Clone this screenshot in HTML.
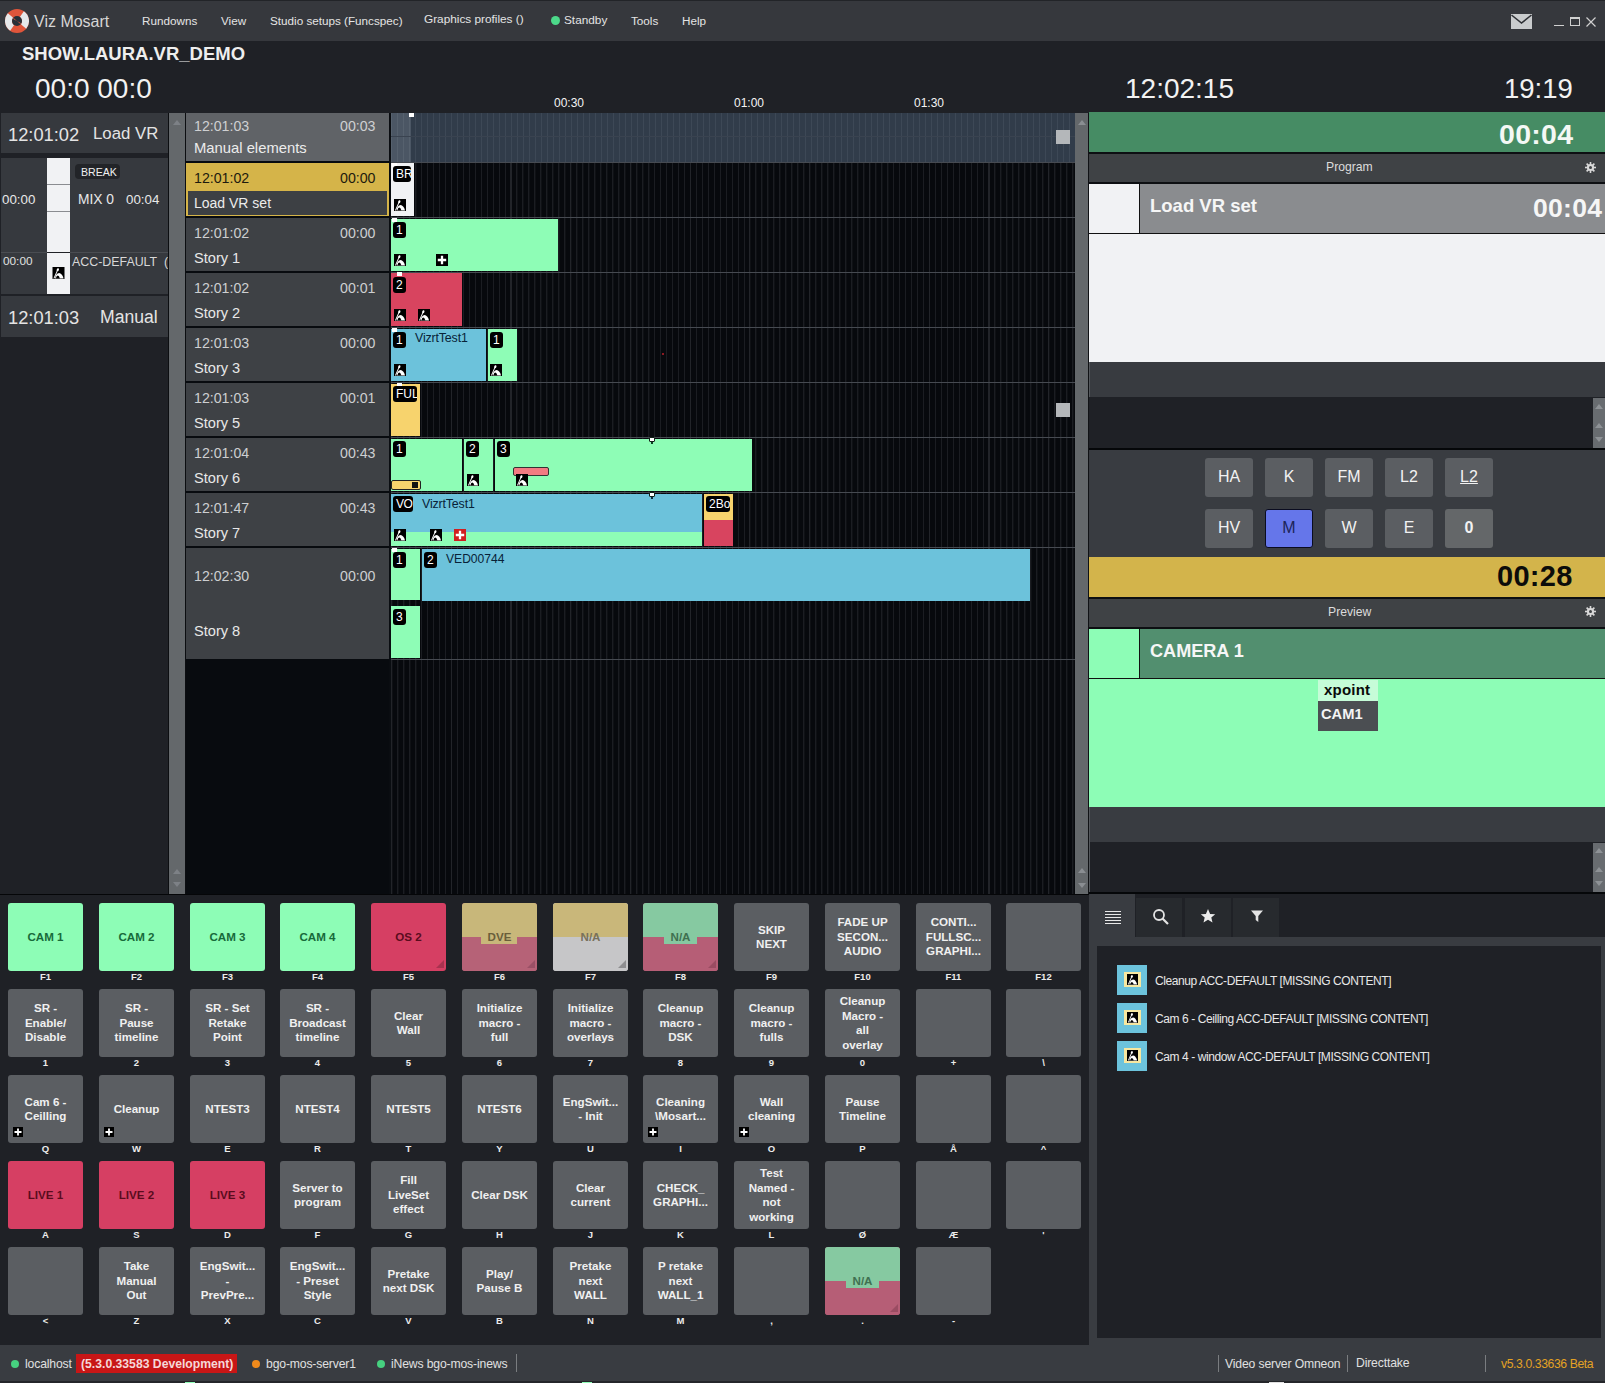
<!DOCTYPE html>
<html><head><meta charset="utf-8">
<style>
*{box-sizing:border-box}
html,body{margin:0;padding:0}
body{width:1605px;height:1383px;background:#1f2126;position:relative;overflow:hidden;font-family:"Liberation Sans",sans-serif;color:#e6e6e6}
.a{position:absolute}
.t{position:absolute;white-space:nowrap;line-height:1}
/* title bar */
#tb{left:0;top:0;width:1605px;height:40px;background:#36383d;border-top:1px solid #26282c}
.mn{position:absolute;top:15px;font-size:13px;color:#e4e4e4;white-space:nowrap;line-height:1}
/* timeline */
.grid{background-color:#07090d;background-image:repeating-linear-gradient(90deg,#222429 0px,#222429 1px,transparent 1px,transparent 59.75px),repeating-linear-gradient(90deg,#1b1d22 0px,#1b1d22 1px,#0f1115 1px,#0f1115 1.6px,transparent 1.6px,transparent 5.975px)}
.row{position:absolute;left:186px;width:203px;background:#3e4145}
.rt{position:absolute;left:8px;font-size:15px;color:#b9bbbe;white-space:nowrap;line-height:1}
.rd{position:absolute;right:14px;font-size:15px;color:#b9bbbe;white-space:nowrap;line-height:1}
.rn{position:absolute;left:8px;font-size:15px;color:#e8e8e8;white-space:nowrap;line-height:1}
.hl{position:absolute;left:389px;width:686px;height:1px;background:#3b4048}
.blk{position:absolute}
.num{position:absolute;background:#000;color:#fff;font-size:12px;line-height:16px;height:16px;border-radius:3px;padding:0 3px;white-space:nowrap;overflow:hidden}
.ic{position:absolute;width:13px;height:13px;background:#000}
/* buttons */
.btn{position:absolute;width:74px;height:67px;background:#5b5e62;border-radius:3px;color:#f0f0f0;font-size:12.5px;font-weight:bold;text-align:center;display:flex;align-items:center;justify-content:center;line-height:14.5px}
.key{position:absolute;width:74px;text-align:center;font-size:10px;font-weight:bold;color:#e8e8e8;line-height:1}
</style></head><body>

<svg width="0" height="0" style="position:absolute"><defs>
<symbol id="aic" viewBox="0 0 12 12"><rect width="12" height="12" fill="#000"/><path d="M0.9 11.4 L4.5 3.2 L5.4 3.5 L1.9 11.4 Z" fill="#fff"/><ellipse cx="5.3" cy="2.7" rx="1.1" ry="1.5" transform="rotate(25 5.3 2.7)" fill="#fff"/><path d="M2.5 11.4 Q3.4 6.4 6.6 6.1 Q9.4 6.3 11.1 11.4 Z" fill="#fff"/><path d="M3.3 11.5 Q4.0 8.6 5.3 8.6 Q6.6 8.7 7.4 11.5 Z" fill="#000"/></symbol>
</defs></svg>
<!-- TITLE BAR -->
<!-- TITLE BAR -->
<div class="a" style="left:0;top:0;width:1605px;height:41px;background:#36383d;border-top:1px solid #222428"></div>
<svg class="a" style="left:5px;top:9px" width="24" height="24" viewBox="1 1 24 24">
 <circle cx="13" cy="13" r="12" fill="#e0553a"/>
 <path d="M19.88 3.17 A12 12 0 0 1 22.19 20.71 L16.83 16.21 A5 5 0 0 0 15.87 8.90 Z" fill="#e6e8ea"/>
 <path d="M6.12 22.83 A12 12 0 0 1 3.81 5.29 L9.17 9.79 A5 5 0 0 0 10.13 17.10 Z" fill="#e6e8ea"/>
 <circle cx="13" cy="13" r="5" fill="#283038"/>
 <path d="M8.5 9 L13 13 L10 11.5 Z M17.5 17 L13 13 L16 14.5 Z" fill="#e0553a"/>
</svg>
<div class="t" style="left:34px;top:14px;font-size:16px;color:#d6d6d6">Viz Mosart</div>
<div class="mn" style="left:142px;font-size:11.7px">Rundowns</div>
<div class="mn" style="left:221px;font-size:11.7px">View</div>
<div class="mn" style="left:270px;font-size:11.7px">Studio setups (Funcspec)</div>
<div class="mn" style="left:424px;top:14px;font-size:11.8px">Graphics profiles ()</div>
<div class="a" style="left:551px;top:16px;width:9px;height:9px;border-radius:50%;background:#4cd98a"></div>
<div class="mn" style="left:564px;font-size:11.8px">Standby</div>
<div class="mn" style="left:631px;font-size:11.7px">Tools</div>
<div class="mn" style="left:682px;font-size:11.7px">Help</div>
<svg class="a" style="left:1510px;top:13px" width="23" height="17" viewBox="0 0 23 17"><rect x="1" y="1" width="21" height="15" fill="#c9cbcd"/><path d="M1.5 2 L11.5 10 L21.5 2" stroke="#2e3035" stroke-width="1.6" fill="none"/></svg>
<div class="a" style="left:1554px;top:25px;width:10px;height:1px;background:#d0d0d0"></div>
<div class="a" style="left:1570px;top:17px;width:10px;height:9px;border:1px solid #d0d0d0;border-top-width:2px"></div>
<svg class="a" style="left:1586px;top:17px" width="10" height="10" viewBox="0 0 10 10"><path d="M0.5 0.5 L9.5 9.5 M9.5 0.5 L0.5 9.5" stroke="#d0d0d0" stroke-width="1.2"/></svg>

<!-- HEADER -->
<div class="t" style="left:22px;top:45px;font-size:18.5px;font-weight:bold;color:#eeeeee">SHOW.LAURA.VR_DEMO</div>
<div class="t" style="left:35px;top:75px;font-size:28px;color:#f2f2f2">00:0 00:0</div>
<div class="t" style="left:1125px;top:75px;font-size:28px;color:#f2f2f2">12:02:15</div>
<div class="t" style="left:1504px;top:75px;font-size:27.5px;color:#f2f2f2">19:19</div>
<div class="t" style="left:554px;top:97px;font-size:12px;color:#f4f4f4">00:30</div>
<div class="t" style="left:734px;top:97px;font-size:12px;color:#f4f4f4">01:00</div>
<div class="t" style="left:914px;top:97px;font-size:12px;color:#f4f4f4">01:30</div>

<!-- LEFT PANEL -->
<div class="a" style="left:0;top:113px;width:169px;height:781px;background:#1f2126"></div>
<div class="a" style="left:1px;top:113px;width:167px;height:40px;background:#36393e"></div>
<div class="t" style="left:8px;top:126px;font-size:18.3px;color:#e4e4e4">12:01:02</div>
<div class="t" style="left:93px;top:126px;font-size:16.8px;color:#e4e4e4">Load VR</div>
<div class="a" style="left:1px;top:158px;width:167px;height:136px;background:#36393e;overflow:hidden">
  <div class="a" style="left:46px;top:0;width:1px;height:136px;background:#33363a"></div>
  <div class="a" style="left:46px;top:0;width:23px;height:136px;background:#f1f2f4"></div>
  <div class="a" style="left:46px;top:26px;width:23px;height:1px;background:#8a8c90"></div>
  <div class="a" style="left:46px;top:53px;width:23px;height:1px;background:#8a8c90"></div>
  <div class="a" style="left:0;top:94px;width:168px;height:1px;background:#4a4d52"></div>
  <div class="a" style="left:46px;top:94px;width:23px;height:1px;background:#202226"></div>
  <div class="a" style="left:74px;top:6px;width:45px;height:15px;border-radius:4px;background:#222428"></div>
  <div class="t" style="left:80px;top:9px;font-size:10.6px;color:#f0f0f0">BREAK</div>
  <div class="t" style="left:1px;top:35px;font-size:13.3px;color:#e8e8e8">00:00</div>
  <div class="t" style="left:77px;top:35px;font-size:13.8px;color:#e8e8e8">MIX 0</div>
  <div class="t" style="left:125px;top:35px;font-size:13.3px;color:#e8e8e8">00:04</div>
  <div class="t" style="left:2px;top:98px;font-size:11.8px;color:#e0e0e0">00:00</div>
  <div class="t" style="left:71px;top:98px;font-size:12.4px;color:#d8d8d8">ACC-DEFAULT&nbsp;&nbsp;(</div>
  <svg class="a" style="left:51px;top:109px" width="13" height="12"><use href="#aic"/></svg>
</div>
<div class="a" style="left:1px;top:296px;width:167px;height:41px;background:#36393e"></div>
<div class="t" style="left:8px;top:309px;font-size:18.3px;color:#e4e4e4">12:01:03</div>
<div class="t" style="left:100px;top:309px;font-size:17.6px;color:#e4e4e4">Manual</div>

<!-- LEFT SCROLLBAR -->
<div class="a" style="left:168px;top:113px;width:1px;height:781px;background:#0c0e11"></div><div class="a" style="left:169px;top:113px;width:16px;height:781px;background:#64686b"></div>
<div class="a" style="left:173px;top:120px;width:0;height:0;border-left:4px solid transparent;border-right:4px solid transparent;border-bottom:5px solid #7d8186"></div>
<div class="a" style="left:173px;top:869px;width:0;height:0;border-left:4px solid transparent;border-right:4px solid transparent;border-bottom:5px solid #7d8186"></div>
<div class="a" style="left:173px;top:882px;width:0;height:0;border-left:4px solid transparent;border-right:4px solid transparent;border-top:5px solid #7d8186"></div>

<div class="a" style="left:186px;top:113px;width:203px;height:781px;background:#080b0f"></div>
<div class="a" style="left:185px;top:113px;width:1px;height:781px;background:#0c0e11"></div>
<div class="a grid" style="left:391px;top:113px;width:684px;height:781px"></div>
<div class="a" style="left:389px;top:113px;width:2px;height:781px;background:#0a0d11"></div>
<div class="a" style="left:391px;top:113px;width:684px;height:49px;background-color:#313c4a;background-image:repeating-linear-gradient(90deg,#3d4856 0px,#3d4856 1px,transparent 1px,transparent 6px)"></div>
<div class="a" style="left:391px;top:113px;width:20px;height:49px;background-color:#4b5664;background-image:repeating-linear-gradient(90deg,#56616e 0px,#56616e 1px,transparent 1px,transparent 6px)"></div>
<div class="a" style="left:391px;top:136px;width:684px;height:1px;background:#3a4350"></div>
<div class="a" style="left:409px;top:113px;width:5px;height:4px;background:#fff"></div>
<div class="a" style="left:1056px;top:130px;width:14px;height:14px;background:#b4b7ba"></div>
<div class="a" style="left:1056px;top:403px;width:14px;height:14px;background:#b4b7ba"></div>
<div class="a" style="left:391px;top:162px;width:684px;height:1px;background:#464a51"></div>
<div class="a" style="left:391px;top:217px;width:684px;height:1px;background:#464a51"></div>
<div class="a" style="left:391px;top:272px;width:684px;height:1px;background:#464a51"></div>
<div class="a" style="left:391px;top:327px;width:684px;height:1px;background:#464a51"></div>
<div class="a" style="left:391px;top:382px;width:684px;height:1px;background:#464a51"></div>
<div class="a" style="left:391px;top:437px;width:684px;height:1px;background:#464a51"></div>
<div class="a" style="left:391px;top:492px;width:684px;height:1px;background:#464a51"></div>
<div class="a" style="left:391px;top:547px;width:684px;height:1px;background:#464a51"></div>
<div class="a" style="left:391px;top:659px;width:684px;height:1px;background:#464a51"></div>
<div class="a" style="left:186px;top:113px;width:203px;height:48px;background:#606367"></div>
<div class="t" style="left:194px;top:119px;font-size:14.2px;color:#cfd0d2">12:01:03</div>
<div class="t" style="left:340px;top:119px;font-size:14.2px;color:#cfd0d2">00:03</div>
<div class="t" style="left:194px;top:141px;font-size:14.8px;color:#ececec">Manual elements</div>
<div class="a" style="left:186px;top:163px;width:203px;height:53px;background:#d5b449"></div>
<div class="a" style="left:188px;top:191px;width:199px;height:24px;background:#3d4044"></div>
<div class="t" style="left:194px;top:171px;font-size:14.2px;color:#1d1a0e">12:01:02</div>
<div class="t" style="left:340px;top:171px;font-size:14.2px;color:#1d1a0e">00:00</div>
<div class="t" style="left:194px;top:196px;font-size:14px;color:#ececec">Load VR set</div>
<div class="a" style="left:186px;top:218px;width:203px;height:53px;background:#3e4145"></div>
<div class="t" style="left:194px;top:226px;font-size:14.2px;color:#cdcfd1">12:01:02</div>
<div class="t" style="left:340px;top:226px;font-size:14.2px;color:#cdcfd1">00:00</div>
<div class="t" style="left:194px;top:251px;font-size:14.6px;color:#e8e8e8">Story 1</div>
<div class="a" style="left:186px;top:273px;width:203px;height:53px;background:#3e4145"></div>
<div class="t" style="left:194px;top:281px;font-size:14.2px;color:#cdcfd1">12:01:02</div>
<div class="t" style="left:340px;top:281px;font-size:14.2px;color:#cdcfd1">00:01</div>
<div class="t" style="left:194px;top:306px;font-size:14.6px;color:#e8e8e8">Story 2</div>
<div class="a" style="left:186px;top:328px;width:203px;height:53px;background:#3e4145"></div>
<div class="t" style="left:194px;top:336px;font-size:14.2px;color:#cdcfd1">12:01:03</div>
<div class="t" style="left:340px;top:336px;font-size:14.2px;color:#cdcfd1">00:00</div>
<div class="t" style="left:194px;top:361px;font-size:14.6px;color:#e8e8e8">Story 3</div>
<div class="a" style="left:186px;top:383px;width:203px;height:53px;background:#3e4145"></div>
<div class="t" style="left:194px;top:391px;font-size:14.2px;color:#cdcfd1">12:01:03</div>
<div class="t" style="left:340px;top:391px;font-size:14.2px;color:#cdcfd1">00:01</div>
<div class="t" style="left:194px;top:416px;font-size:14.6px;color:#e8e8e8">Story 5</div>
<div class="a" style="left:186px;top:438px;width:203px;height:53px;background:#3e4145"></div>
<div class="t" style="left:194px;top:446px;font-size:14.2px;color:#cdcfd1">12:01:04</div>
<div class="t" style="left:340px;top:446px;font-size:14.2px;color:#cdcfd1">00:43</div>
<div class="t" style="left:194px;top:471px;font-size:14.6px;color:#e8e8e8">Story 6</div>
<div class="a" style="left:186px;top:493px;width:203px;height:53px;background:#3e4145"></div>
<div class="t" style="left:194px;top:501px;font-size:14.2px;color:#cdcfd1">12:01:47</div>
<div class="t" style="left:340px;top:501px;font-size:14.2px;color:#cdcfd1">00:43</div>
<div class="t" style="left:194px;top:526px;font-size:14.6px;color:#e8e8e8">Story 7</div>
<div class="a" style="left:186px;top:548px;width:203px;height:111px;background:#3e4145"></div>
<div class="t" style="left:194px;top:569px;font-size:14.2px;color:#cdcfd1">12:02:30</div>
<div class="t" style="left:340px;top:569px;font-size:14.2px;color:#cdcfd1">00:00</div>
<div class="t" style="left:194px;top:624px;font-size:14.6px;color:#e8e8e8">Story 8</div>
<div class="a" style="left:391px;top:163px;width:23px;height:53px;background:#f1f2f4"></div>
<div class="a" style="left:392px;top:163px;width:5px;height:4px;background:#fff"></div>
<div class="num" style="left:393px;top:166px;width:18px;">BR</div>
<svg class="a" style="left:394px;top:199px" width="12" height="12"><use href="#aic"/></svg>
<div class="a" style="left:391px;top:219px;width:167px;height:52px;background:#8efdb6"></div>
<div class="a" style="left:392px;top:218px;width:5px;height:4px;background:#fff"></div>
<div class="num" style="left:393px;top:222px;">1</div>
<svg class="a" style="left:394px;top:254px" width="12" height="12"><use href="#aic"/></svg>
<svg class="a" style="left:436px;top:254px" width="12" height="12" viewBox="0 0 12 12"><rect width="12" height="12" fill="#000"/><path d="M6 1.8 V10.2 M1.8 6 H10.2" stroke="#fff" stroke-width="2.3"/></svg>
<div class="a" style="left:391px;top:273px;width:71px;height:53px;background:#d8445f"></div>
<div class="a" style="left:397px;top:272px;width:5px;height:4px;background:#fff"></div>
<div class="num" style="left:393px;top:277px;">2</div>
<svg class="a" style="left:394px;top:309px" width="12" height="12"><use href="#aic"/></svg>
<svg class="a" style="left:418px;top:309px" width="12" height="12"><use href="#aic"/></svg>
<div class="a" style="left:391px;top:329px;width:95px;height:52px;background:#6cc2db"></div>
<div class="a" style="left:488px;top:329px;width:29px;height:52px;background:#8efdb6"></div>
<div class="a" style="left:392px;top:328px;width:5px;height:4px;background:#fff"></div>
<div class="num" style="left:393px;top:332px;">1</div>
<div class="num" style="left:490px;top:332px;">1</div>
<div class="t" style="left:415px;top:332px;font-size:12.4px;letter-spacing:-0.15px;color:#082238">VizrtTest1</div>
<svg class="a" style="left:394px;top:364px" width="12" height="12"><use href="#aic"/></svg>
<svg class="a" style="left:490px;top:364px" width="12" height="12"><use href="#aic"/></svg>
<div class="a" style="left:662px;top:353px;width:2px;height:2px;background:#8a1a22"></div>
<div class="a" style="left:391px;top:384px;width:29px;height:52px;background:#f7d36d"></div>
<div class="a" style="left:397px;top:383px;width:5px;height:4px;background:#fff"></div>
<div class="num" style="left:393px;top:386px;width:24px;">FUL</div>
<div class="a" style="left:391px;top:439px;width:71px;height:52px;background:#8efdb6"></div>
<div class="a" style="left:464px;top:439px;width:29px;height:52px;background:#8efdb6"></div>
<div class="a" style="left:495px;top:439px;width:257px;height:52px;background:#8efdb6"></div>
<div class="num" style="left:393px;top:441px;">1</div>
<div class="num" style="left:466px;top:441px;">2</div>
<div class="num" style="left:497px;top:441px;">3</div>
<div class="a" style="left:391px;top:480px;width:30px;height:10px;background:#f7d36d;border:1px solid #222;border-radius:2px"></div>
<div class="a" style="left:412px;top:482px;width:6px;height:6px;background:#111"></div>
<div class="a" style="left:513px;top:467px;width:36px;height:9px;background:#f27b82;border:1px solid #333;border-radius:2px"></div>
<svg class="a" style="left:467px;top:474px" width="12" height="12"><use href="#aic"/></svg>
<svg class="a" style="left:516px;top:474px" width="12" height="12"><use href="#aic"/></svg>
<div class="a" style="left:649px;top:437px;width:6px;height:5px;background:#fff;border:1px solid #102018;border-radius:1px"></div><div class="a" style="left:651px;top:442px;width:2px;height:2px;background:#0c3a22"></div>
<div class="a" style="left:391px;top:494px;width:311px;height:38px;background:#6cc2db"></div>
<div class="a" style="left:391px;top:532px;width:311px;height:14px;background:#8efdb6"></div>
<div class="a" style="left:704px;top:494px;width:29px;height:26px;background:#f7d36d"></div>
<div class="a" style="left:704px;top:520px;width:29px;height:26px;background:#d8445f"></div>
<div class="num" style="left:393px;top:496px;width:20px;"><span style="letter-spacing:-0.6px">VO</span></div>
<div class="num" style="left:706px;top:496px;width:24px;">2Box</div>
<div class="t" style="left:422px;top:498px;font-size:12.4px;letter-spacing:-0.15px;color:#082238">VizrtTest1</div>
<svg class="a" style="left:394px;top:529px" width="12" height="12"><use href="#aic"/></svg>
<svg class="a" style="left:430px;top:529px" width="12" height="12"><use href="#aic"/></svg>
<svg class="a" style="left:454px;top:529px" width="12" height="12" viewBox="0 0 12 12"><rect width="12" height="12" fill="#d11f1f"/><path d="M6 1.8 V10.2 M1.8 6 H10.2" stroke="#fff" stroke-width="2.3"/></svg>
<div class="a" style="left:649px;top:492px;width:6px;height:5px;background:#fff;border:1px solid #102018;border-radius:1px"></div><div class="a" style="left:651px;top:497px;width:2px;height:2px;background:#0c2a3a"></div>
<div class="a" style="left:391px;top:549px;width:29px;height:51px;background:#8efdb6"></div>
<div class="a" style="left:422px;top:549px;width:608px;height:52px;background:#6cc2db"></div>
<div class="a" style="left:391px;top:606px;width:29px;height:52px;background:#8efdb6"></div>
<div class="a" style="left:392px;top:548px;width:5px;height:4px;background:#fff"></div>
<div class="num" style="left:393px;top:552px;">1</div>
<div class="num" style="left:424px;top:552px;">2</div>
<div class="num" style="left:393px;top:609px;">3</div>
<div class="t" style="left:446px;top:553px;font-size:12.1px;color:#082238">VED00744</div>
<div class="a" style="left:1075px;top:113px;width:13px;height:781px;background:#64686b"></div>
<div class="a" style="left:1088px;top:113px;width:1px;height:781px;background:#101215"></div>
<div class="a" style="left:1078px;top:120px;width:0;height:0;border-left:4px solid transparent;border-right:4px solid transparent;border-bottom:5px solid #8a8e92"></div>
<div class="a" style="left:1078px;top:868px;width:0;height:0;border-left:4px solid transparent;border-right:4px solid transparent;border-bottom:5px solid #8a8e92"></div>
<div class="a" style="left:1078px;top:883px;width:0;height:0;border-left:4px solid transparent;border-right:4px solid transparent;border-top:5px solid #8a8e92"></div>
<div class="a" style="left:1089px;top:113px;width:516px;height:780px;background:#393c41"></div>
<div class="a" style="left:1089px;top:112px;width:516px;height:40px;background:#468c64"></div>
<div class="t" style="left:1499px;top:120px;font-size:28.5px;font-weight:bold;color:#f4f8f5;letter-spacing:0.3px">00:04</div>
<div class="a" style="left:1089px;top:152px;width:516px;height:2px;background:#0d0f12"></div>
<div class="a" style="left:1089px;top:154px;width:516px;height:28px;background:#3f4245"></div>
<div class="t" style="left:1326px;top:161px;font-size:12.2px;color:#dcdcdc">Program</div>
<svg class="a" style="left:1585px;top:162px" width="11" height="11" viewBox="0 0 11 11"><g fill="#d8d8d8"><circle cx="5.5" cy="5.5" r="3.6"/><rect x="4.7" y="0" width="1.6" height="11"/><rect x="0" y="4.7" width="11" height="1.6"/><rect x="4.7" y="0" width="1.6" height="11" transform="rotate(45 5.5 5.5)"/><rect x="4.7" y="0" width="1.6" height="11" transform="rotate(-45 5.5 5.5)"/></g><circle cx="5.5" cy="5.5" r="1.5" fill="#3f4245"/></svg>
<div class="a" style="left:1089px;top:182px;width:516px;height:2px;background:#0d0f12"></div>
<div class="a" style="left:1089px;top:184px;width:50px;height:49px;background:#f1f2f4"></div>
<div class="a" style="left:1139px;top:184px;width:1px;height:49px;background:#111"></div>
<div class="a" style="left:1140px;top:184px;width:465px;height:49px;background:#8a8c8f"></div>
<div class="t" style="left:1150px;top:197px;font-size:18.5px;font-weight:bold;color:#f6f6f6">Load VR set</div>
<div class="t" style="left:1533px;top:195px;font-size:26.5px;font-weight:bold;color:#f6f6f6;letter-spacing:0.3px">00:04</div>
<div class="a" style="left:1089px;top:233px;width:516px;height:1px;background:#111"></div>
<div class="a" style="left:1089px;top:234px;width:516px;height:128px;background:#f1f2f4"></div>
<div class="a" style="left:1089px;top:362px;width:516px;height:35px;background:#383b40"></div>
<div class="a" style="left:1089px;top:362px;width:1px;height:88px;background:#55595d"></div>
<div class="a" style="left:1089px;top:397px;width:516px;height:51px;background:#1f2126"></div>
<div class="a" style="left:1593px;top:398px;width:12px;height:50px;background:#686c70"></div>
<div class="a" style="left:1595px;top:404px;width:0;height:0;border-left:4px solid transparent;border-right:4px solid transparent;border-bottom:5px solid #8e9296"></div>
<div class="a" style="left:1595px;top:423px;width:0;height:0;border-left:4px solid transparent;border-right:4px solid transparent;border-bottom:5px solid #8e9296"></div>
<div class="a" style="left:1595px;top:437px;width:0;height:0;border-left:4px solid transparent;border-right:4px solid transparent;border-top:5px solid #8e9296"></div>
<div class="a" style="left:1089px;top:448px;width:516px;height:2px;background:#050709"></div>
<div class="a" style="left:1089px;top:450px;width:516px;height:107px;background:#393c41"></div>
<div class="a" style="left:1205px;top:458px;width:48px;height:39px;background:#5b5e62;border-radius:3px;"></div>
<div class="a" style="left:1205px;top:458px;width:48px;height:39px;line-height:37px;text-align:center;font-size:16px;font-weight:normal;color:#f2f2f2">HA</div>
<div class="a" style="left:1265px;top:458px;width:48px;height:39px;background:#5b5e62;border-radius:3px;"></div>
<div class="a" style="left:1265px;top:458px;width:48px;height:39px;line-height:37px;text-align:center;font-size:16px;font-weight:normal;color:#f2f2f2">K</div>
<div class="a" style="left:1325px;top:458px;width:48px;height:39px;background:#5b5e62;border-radius:3px;"></div>
<div class="a" style="left:1325px;top:458px;width:48px;height:39px;line-height:37px;text-align:center;font-size:16px;font-weight:normal;color:#f2f2f2">FM</div>
<div class="a" style="left:1385px;top:458px;width:48px;height:39px;background:#5b5e62;border-radius:3px;"></div>
<div class="a" style="left:1385px;top:458px;width:48px;height:39px;line-height:37px;text-align:center;font-size:16px;font-weight:normal;color:#f2f2f2">L2</div>
<div class="a" style="left:1445px;top:458px;width:48px;height:39px;background:#5b5e62;border-radius:3px;"></div>
<div class="a" style="left:1445px;top:458px;width:48px;height:39px;line-height:37px;text-align:center;font-size:16px;font-weight:normal;color:#f2f2f2"><span style="text-decoration:underline">L2</span></div>
<div class="a" style="left:1205px;top:509px;width:48px;height:39px;background:#5b5e62;border-radius:3px;"></div>
<div class="a" style="left:1205px;top:509px;width:48px;height:39px;line-height:37px;text-align:center;font-size:16px;font-weight:normal;color:#f2f2f2">HV</div>
<div class="a" style="left:1265px;top:509px;width:48px;height:39px;background:#6576ea;border-radius:3px;border:1px solid #0a0c20;"></div>
<div class="a" style="left:1265px;top:509px;width:48px;height:39px;line-height:37px;text-align:center;font-size:16px;font-weight:normal;color:#1c2458">M</div>
<div class="a" style="left:1325px;top:509px;width:48px;height:39px;background:#5b5e62;border-radius:3px;"></div>
<div class="a" style="left:1325px;top:509px;width:48px;height:39px;line-height:37px;text-align:center;font-size:16px;font-weight:normal;color:#f2f2f2">W</div>
<div class="a" style="left:1385px;top:509px;width:48px;height:39px;background:#5b5e62;border-radius:3px;"></div>
<div class="a" style="left:1385px;top:509px;width:48px;height:39px;line-height:37px;text-align:center;font-size:16px;font-weight:normal;color:#f2f2f2">E</div>
<div class="a" style="left:1445px;top:509px;width:48px;height:39px;background:#646769;border-radius:3px;"></div>
<div class="a" style="left:1445px;top:509px;width:48px;height:39px;line-height:37px;text-align:center;font-size:16px;font-weight:bold;color:#f2f2f2">0</div>
<div class="a" style="left:1089px;top:557px;width:516px;height:40px;background:#d3b44b"></div>
<div class="t" style="left:1497px;top:562px;font-size:29px;font-weight:bold;color:#0c0c0a;letter-spacing:0.3px">00:28</div>
<div class="a" style="left:1089px;top:597px;width:516px;height:2px;background:#0d0f12"></div>
<div class="a" style="left:1089px;top:599px;width:516px;height:28px;background:#3f4245"></div>
<div class="t" style="left:1328px;top:606px;font-size:12.2px;color:#dcdcdc">Preview</div>
<svg class="a" style="left:1585px;top:606px" width="11" height="11" viewBox="0 0 11 11"><g fill="#d8d8d8"><circle cx="5.5" cy="5.5" r="3.6"/><rect x="4.7" y="0" width="1.6" height="11"/><rect x="0" y="4.7" width="11" height="1.6"/><rect x="4.7" y="0" width="1.6" height="11" transform="rotate(45 5.5 5.5)"/><rect x="4.7" y="0" width="1.6" height="11" transform="rotate(-45 5.5 5.5)"/></g><circle cx="5.5" cy="5.5" r="1.5" fill="#3f4245"/></svg>
<div class="a" style="left:1089px;top:627px;width:516px;height:2px;background:#0d0f12"></div>
<div class="a" style="left:1089px;top:629px;width:50px;height:49px;background:#8dfdb6"></div>
<div class="a" style="left:1139px;top:629px;width:1px;height:49px;background:#111"></div>
<div class="a" style="left:1140px;top:629px;width:465px;height:49px;background:#528f6f"></div>
<div class="t" style="left:1150px;top:642px;font-size:18.1px;font-weight:bold;color:#f6f6f6">CAMERA 1</div>
<div class="a" style="left:1089px;top:678px;width:516px;height:1px;background:#111"></div>
<div class="a" style="left:1089px;top:679px;width:516px;height:128px;background:#8dfdb6"></div>
<div class="a" style="left:1318px;top:680px;width:60px;height:21px;background:#c6fcd8"></div>
<div class="t" style="left:1324px;top:682px;font-size:15px;font-weight:bold;color:#0a0a0a;letter-spacing:0.2px">xpoint</div>
<div class="a" style="left:1318px;top:701px;width:60px;height:30px;background:#4b4e52"></div>
<div class="t" style="left:1321px;top:707px;font-size:14.7px;font-weight:bold;color:#f4f4f4">CAM1</div>
<div class="a" style="left:1089px;top:807px;width:516px;height:35px;background:#393c41"></div>
<div class="a" style="left:1089px;top:842px;width:516px;height:50px;background:#1f2126"></div>
<div class="a" style="left:1089px;top:807px;width:1px;height:85px;background:#55595d"></div>
<div class="a" style="left:1593px;top:843px;width:12px;height:49px;background:#686c70"></div>
<div class="a" style="left:1595px;top:848px;width:0;height:0;border-left:4px solid transparent;border-right:4px solid transparent;border-bottom:5px solid #8e9296"></div>
<div class="a" style="left:1595px;top:867px;width:0;height:0;border-left:4px solid transparent;border-right:4px solid transparent;border-bottom:5px solid #8e9296"></div>
<div class="a" style="left:1595px;top:881px;width:0;height:0;border-left:4px solid transparent;border-right:4px solid transparent;border-top:5px solid #8e9296"></div>
<div class="a" style="left:1089px;top:892px;width:516px;height:2px;background:#050709"></div>
<div class="a" style="left:1089px;top:894px;width:516px;height:451px;background:#1f2126"></div>
<div class="a" style="left:1089px;top:937px;width:516px;height:408px;background:#393c41"></div>
<div class="a" style="left:1089px;top:894px;width:46px;height:50px;background:#393c41"></div>
<div class="a" style="left:1136px;top:898px;width:46px;height:39px;background:#272a2e"></div>
<div class="a" style="left:1185px;top:898px;width:46px;height:39px;background:#272a2e"></div>
<div class="a" style="left:1233px;top:898px;width:46px;height:39px;background:#272a2e"></div>
<div class="a" style="left:1105px;top:911px;width:16px;height:1.4px;background:#e8e8e8"></div>
<div class="a" style="left:1105px;top:914px;width:16px;height:1.4px;background:#e8e8e8"></div>
<div class="a" style="left:1105px;top:917px;width:16px;height:1.4px;background:#e8e8e8"></div>
<div class="a" style="left:1105px;top:920px;width:16px;height:1.4px;background:#e8e8e8"></div>
<div class="a" style="left:1105px;top:923px;width:16px;height:1.4px;background:#e8e8e8"></div>
<svg class="a" style="left:1152px;top:908px" width="18" height="18" viewBox="0 0 18 18"><circle cx="7" cy="7" r="5" stroke="#e4e4e4" stroke-width="1.8" fill="none"/><path d="M10.5 10.5 L16 16" stroke="#e4e4e4" stroke-width="2.2"/></svg>
<svg class="a" style="left:1200px;top:908px" width="16" height="16" viewBox="0 0 16 16"><path d="M8 1 L10.1 5.9 L15.2 6.2 L11.3 9.5 L12.5 14.5 L8 11.7 L3.5 14.5 L4.7 9.5 L0.8 6.2 L5.9 5.9 Z" fill="#ececec"/></svg>
<svg class="a" style="left:1250px;top:909px" width="14" height="14" viewBox="0 0 14 14"><path d="M1 1.5 H13 L8.3 7 V13 L5.7 11 V7 Z" fill="#e4e4e4"/></svg>
<div class="a" style="left:1097px;top:946px;width:504px;height:392px;background:#1f2126"></div>
<div class="a" style="left:1117px;top:965px;width:30px;height:30px;background:#6cc3dc"></div>
<div class="a" style="left:1124px;top:972px;width:17px;height:15px;background:#f7e7a0"></div>
<svg class="a" style="left:1126px;top:974px" width="13" height="11"><use href="#aic"/></svg>
<div class="t" style="left:1155px;top:975px;font-size:12px;letter-spacing:-0.42px;color:#e8e8e8">Cleanup ACC-DEFAULT [MISSING CONTENT]</div>
<div class="a" style="left:1117px;top:1003px;width:30px;height:30px;background:#6cc3dc"></div>
<div class="a" style="left:1124px;top:1010px;width:17px;height:15px;background:#f7e7a0"></div>
<svg class="a" style="left:1126px;top:1012px" width="13" height="11"><use href="#aic"/></svg>
<div class="t" style="left:1155px;top:1013px;font-size:12px;letter-spacing:-0.42px;color:#e8e8e8">Cam 6 - Ceilling ACC-DEFAULT [MISSING CONTENT]</div>
<div class="a" style="left:1117px;top:1041px;width:30px;height:30px;background:#6cc3dc"></div>
<div class="a" style="left:1124px;top:1048px;width:17px;height:15px;background:#f7e7a0"></div>
<svg class="a" style="left:1126px;top:1050px" width="13" height="11"><use href="#aic"/></svg>
<div class="t" style="left:1155px;top:1051px;font-size:12px;letter-spacing:-0.42px;color:#e8e8e8">Cam 4 - window ACC-DEFAULT [MISSING CONTENT]</div>
<div class="a" style="left:0;top:894px;width:1089px;height:451px;background:#1f2126"></div>
<div class="a" style="left:0;top:894px;width:1089px;height:1px;background:#050608"></div>
<div class="a" style="left:1089px;top:937px;width:8px;height:408px;background:#393c41"></div>
<div class="a" style="left:8px;top:903px;width:75px;height:68px;background:#8dfdb6;border-radius:3px;overflow:hidden"><div class="a" style="left:0;top:0;width:75px;height:68px;display:flex;align-items:center;justify-content:center;text-align:center;font-size:11.6px;font-weight:bold;line-height:14.5px;color:#176a3a">CAM 1</div></div>
<div class="t" style="left:8px;top:972px;width:75px;text-align:center;font-size:9.5px;font-weight:bold;color:#ececec">F1</div>
<div class="a" style="left:99px;top:903px;width:75px;height:68px;background:#8dfdb6;border-radius:3px;overflow:hidden"><div class="a" style="left:0;top:0;width:75px;height:68px;display:flex;align-items:center;justify-content:center;text-align:center;font-size:11.6px;font-weight:bold;line-height:14.5px;color:#176a3a">CAM 2</div></div>
<div class="t" style="left:99px;top:972px;width:75px;text-align:center;font-size:9.5px;font-weight:bold;color:#ececec">F2</div>
<div class="a" style="left:190px;top:903px;width:75px;height:68px;background:#8dfdb6;border-radius:3px;overflow:hidden"><div class="a" style="left:0;top:0;width:75px;height:68px;display:flex;align-items:center;justify-content:center;text-align:center;font-size:11.6px;font-weight:bold;line-height:14.5px;color:#176a3a">CAM 3</div></div>
<div class="t" style="left:190px;top:972px;width:75px;text-align:center;font-size:9.5px;font-weight:bold;color:#ececec">F3</div>
<div class="a" style="left:280px;top:903px;width:75px;height:68px;background:#8dfdb6;border-radius:3px;overflow:hidden"><div class="a" style="left:0;top:0;width:75px;height:68px;display:flex;align-items:center;justify-content:center;text-align:center;font-size:11.6px;font-weight:bold;line-height:14.5px;color:#176a3a">CAM 4</div></div>
<div class="t" style="left:280px;top:972px;width:75px;text-align:center;font-size:9.5px;font-weight:bold;color:#ececec">F4</div>
<div class="a" style="left:371px;top:903px;width:75px;height:68px;background:#d63f63;border-radius:3px;overflow:hidden"><div class="a" style="left:65px;top:57px;width:0;height:0;border-left:8px solid transparent;border-bottom:8px solid #a8324f"></div><div class="a" style="left:0;top:0;width:75px;height:68px;display:flex;align-items:center;justify-content:center;text-align:center;font-size:11.6px;font-weight:bold;line-height:14.5px;color:#5a0c1e">OS 2</div></div>
<div class="t" style="left:371px;top:972px;width:75px;text-align:center;font-size:9.5px;font-weight:bold;color:#ececec">F5</div>
<div class="a" style="left:462px;top:903px;width:75px;height:68px;background:#b66277;border-radius:3px;overflow:hidden"><div class="a" style="left:0;top:0;width:75px;height:34px;background:#c8b77a"></div><div class="a" style="left:0;top:34px;width:75px;height:34px;background:#b66277"></div><div class="a" style="left:19px;top:33px;width:36px;height:8px;background:#c8b77a"></div><div class="a" style="left:65px;top:57px;width:0;height:0;border-left:8px solid transparent;border-bottom:8px solid #9a5066"></div><div class="a" style="left:0;top:0;width:75px;height:68px;display:flex;align-items:center;justify-content:center;text-align:center;font-size:11.6px;font-weight:bold;line-height:14.5px;color:#6a5e3a">DVE</div></div>
<div class="t" style="left:462px;top:972px;width:75px;text-align:center;font-size:9.5px;font-weight:bold;color:#ececec">F6</div>
<div class="a" style="left:553px;top:903px;width:75px;height:68px;background:#c6c6c8;border-radius:3px;overflow:hidden"><div class="a" style="left:0;top:0;width:75px;height:34px;background:#c9b77a"></div><div class="a" style="left:0;top:34px;width:75px;height:34px;background:#c6c6c8"></div><div class="a" style="left:65px;top:57px;width:0;height:0;border-left:8px solid transparent;border-bottom:8px solid #8e8e90"></div><div class="a" style="left:0;top:0;width:75px;height:68px;display:flex;align-items:center;justify-content:center;text-align:center;font-size:11.6px;font-weight:bold;line-height:14.5px;color:#78715c">N/A</div></div>
<div class="t" style="left:553px;top:972px;width:75px;text-align:center;font-size:9.5px;font-weight:bold;color:#ececec">F7</div>
<div class="a" style="left:643px;top:903px;width:75px;height:68px;background:#b65e76;border-radius:3px;overflow:hidden"><div class="a" style="left:0;top:0;width:75px;height:34px;background:#86c9a1"></div><div class="a" style="left:0;top:34px;width:75px;height:34px;background:#b65e76"></div><div class="a" style="left:21px;top:33px;width:33px;height:8px;background:#86c9a1"></div><div class="a" style="left:65px;top:57px;width:0;height:0;border-left:8px solid transparent;border-bottom:8px solid #9a4c62"></div><div class="a" style="left:0;top:0;width:75px;height:68px;display:flex;align-items:center;justify-content:center;text-align:center;font-size:11.6px;font-weight:bold;line-height:14.5px;color:#3f7050">N/A</div></div>
<div class="t" style="left:643px;top:972px;width:75px;text-align:center;font-size:9.5px;font-weight:bold;color:#ececec">F8</div>
<div class="a" style="left:734px;top:903px;width:75px;height:68px;background:#5b5e62;border-radius:3px;overflow:hidden"><div class="a" style="left:0;top:0;width:75px;height:68px;display:flex;align-items:center;justify-content:center;text-align:center;font-size:11.6px;font-weight:bold;line-height:14.5px;color:#f0f0f0">SKIP<br>NEXT</div></div>
<div class="t" style="left:734px;top:972px;width:75px;text-align:center;font-size:9.5px;font-weight:bold;color:#ececec">F9</div>
<div class="a" style="left:825px;top:903px;width:75px;height:68px;background:#5b5e62;border-radius:3px;overflow:hidden"><div class="a" style="left:0;top:0;width:75px;height:68px;display:flex;align-items:center;justify-content:center;text-align:center;font-size:11.6px;font-weight:bold;line-height:14.5px;color:#f0f0f0">FADE UP<br>SECON...<br>AUDIO</div></div>
<div class="t" style="left:825px;top:972px;width:75px;text-align:center;font-size:9.5px;font-weight:bold;color:#ececec">F10</div>
<div class="a" style="left:916px;top:903px;width:75px;height:68px;background:#5b5e62;border-radius:3px;overflow:hidden"><div class="a" style="left:0;top:0;width:75px;height:68px;display:flex;align-items:center;justify-content:center;text-align:center;font-size:11.6px;font-weight:bold;line-height:14.5px;color:#f0f0f0">CONTI...<br>FULLSC...<br>GRAPHI...</div></div>
<div class="t" style="left:916px;top:972px;width:75px;text-align:center;font-size:9.5px;font-weight:bold;color:#ececec">F11</div>
<div class="a" style="left:1006px;top:903px;width:75px;height:68px;background:#5b5e62;border-radius:3px;overflow:hidden"><div class="a" style="left:0;top:0;width:75px;height:68px;display:flex;align-items:center;justify-content:center;text-align:center;font-size:11.6px;font-weight:bold;line-height:14.5px;color:#f0f0f0"></div></div>
<div class="t" style="left:1006px;top:972px;width:75px;text-align:center;font-size:9.5px;font-weight:bold;color:#ececec">F12</div>
<div class="a" style="left:8px;top:989px;width:75px;height:68px;background:#5b5e62;border-radius:3px;overflow:hidden"><div class="a" style="left:0;top:0;width:75px;height:68px;display:flex;align-items:center;justify-content:center;text-align:center;font-size:11.6px;font-weight:bold;line-height:14.5px;color:#f0f0f0">SR -<br>Enable/<br>Disable</div></div>
<div class="t" style="left:8px;top:1058px;width:75px;text-align:center;font-size:9.5px;font-weight:bold;color:#ececec">1</div>
<div class="a" style="left:99px;top:989px;width:75px;height:68px;background:#5b5e62;border-radius:3px;overflow:hidden"><div class="a" style="left:0;top:0;width:75px;height:68px;display:flex;align-items:center;justify-content:center;text-align:center;font-size:11.6px;font-weight:bold;line-height:14.5px;color:#f0f0f0">SR -<br>Pause<br>timeline</div></div>
<div class="t" style="left:99px;top:1058px;width:75px;text-align:center;font-size:9.5px;font-weight:bold;color:#ececec">2</div>
<div class="a" style="left:190px;top:989px;width:75px;height:68px;background:#5b5e62;border-radius:3px;overflow:hidden"><div class="a" style="left:0;top:0;width:75px;height:68px;display:flex;align-items:center;justify-content:center;text-align:center;font-size:11.6px;font-weight:bold;line-height:14.5px;color:#f0f0f0">SR - Set<br>Retake<br>Point</div></div>
<div class="t" style="left:190px;top:1058px;width:75px;text-align:center;font-size:9.5px;font-weight:bold;color:#ececec">3</div>
<div class="a" style="left:280px;top:989px;width:75px;height:68px;background:#5b5e62;border-radius:3px;overflow:hidden"><div class="a" style="left:0;top:0;width:75px;height:68px;display:flex;align-items:center;justify-content:center;text-align:center;font-size:11.6px;font-weight:bold;line-height:14.5px;color:#f0f0f0">SR -<br>Broadcast<br>timeline</div></div>
<div class="t" style="left:280px;top:1058px;width:75px;text-align:center;font-size:9.5px;font-weight:bold;color:#ececec">4</div>
<div class="a" style="left:371px;top:989px;width:75px;height:68px;background:#5b5e62;border-radius:3px;overflow:hidden"><div class="a" style="left:0;top:0;width:75px;height:68px;display:flex;align-items:center;justify-content:center;text-align:center;font-size:11.6px;font-weight:bold;line-height:14.5px;color:#f0f0f0">Clear<br>Wall</div></div>
<div class="t" style="left:371px;top:1058px;width:75px;text-align:center;font-size:9.5px;font-weight:bold;color:#ececec">5</div>
<div class="a" style="left:462px;top:989px;width:75px;height:68px;background:#5b5e62;border-radius:3px;overflow:hidden"><div class="a" style="left:0;top:0;width:75px;height:68px;display:flex;align-items:center;justify-content:center;text-align:center;font-size:11.6px;font-weight:bold;line-height:14.5px;color:#f0f0f0">Initialize<br>macro -<br>full</div></div>
<div class="t" style="left:462px;top:1058px;width:75px;text-align:center;font-size:9.5px;font-weight:bold;color:#ececec">6</div>
<div class="a" style="left:553px;top:989px;width:75px;height:68px;background:#5b5e62;border-radius:3px;overflow:hidden"><div class="a" style="left:0;top:0;width:75px;height:68px;display:flex;align-items:center;justify-content:center;text-align:center;font-size:11.6px;font-weight:bold;line-height:14.5px;color:#f0f0f0">Initialize<br>macro -<br>overlays</div></div>
<div class="t" style="left:553px;top:1058px;width:75px;text-align:center;font-size:9.5px;font-weight:bold;color:#ececec">7</div>
<div class="a" style="left:643px;top:989px;width:75px;height:68px;background:#5b5e62;border-radius:3px;overflow:hidden"><div class="a" style="left:0;top:0;width:75px;height:68px;display:flex;align-items:center;justify-content:center;text-align:center;font-size:11.6px;font-weight:bold;line-height:14.5px;color:#f0f0f0">Cleanup<br>macro -<br>DSK</div></div>
<div class="t" style="left:643px;top:1058px;width:75px;text-align:center;font-size:9.5px;font-weight:bold;color:#ececec">8</div>
<div class="a" style="left:734px;top:989px;width:75px;height:68px;background:#5b5e62;border-radius:3px;overflow:hidden"><div class="a" style="left:0;top:0;width:75px;height:68px;display:flex;align-items:center;justify-content:center;text-align:center;font-size:11.6px;font-weight:bold;line-height:14.5px;color:#f0f0f0">Cleanup<br>macro -<br>fulls</div></div>
<div class="t" style="left:734px;top:1058px;width:75px;text-align:center;font-size:9.5px;font-weight:bold;color:#ececec">9</div>
<div class="a" style="left:825px;top:989px;width:75px;height:68px;background:#5b5e62;border-radius:3px;overflow:hidden"><div class="a" style="left:0;top:0;width:75px;height:68px;display:flex;align-items:center;justify-content:center;text-align:center;font-size:11.6px;font-weight:bold;line-height:14.5px;color:#f0f0f0">Cleanup<br>Macro -<br>all<br>overlay</div></div>
<div class="t" style="left:825px;top:1058px;width:75px;text-align:center;font-size:9.5px;font-weight:bold;color:#ececec">0</div>
<div class="a" style="left:916px;top:989px;width:75px;height:68px;background:#5b5e62;border-radius:3px;overflow:hidden"><div class="a" style="left:0;top:0;width:75px;height:68px;display:flex;align-items:center;justify-content:center;text-align:center;font-size:11.6px;font-weight:bold;line-height:14.5px;color:#f0f0f0"></div></div>
<div class="t" style="left:916px;top:1058px;width:75px;text-align:center;font-size:9.5px;font-weight:bold;color:#ececec">+</div>
<div class="a" style="left:1006px;top:989px;width:75px;height:68px;background:#5b5e62;border-radius:3px;overflow:hidden"><div class="a" style="left:0;top:0;width:75px;height:68px;display:flex;align-items:center;justify-content:center;text-align:center;font-size:11.6px;font-weight:bold;line-height:14.5px;color:#f0f0f0"></div></div>
<div class="t" style="left:1006px;top:1058px;width:75px;text-align:center;font-size:9.5px;font-weight:bold;color:#ececec">\</div>
<div class="a" style="left:8px;top:1075px;width:75px;height:68px;background:#5b5e62;border-radius:3px;overflow:hidden"><svg class="a" style="left:5px;top:52px" width="10" height="10" viewBox="0 0 10 10"><rect width="10" height="10" fill="#000"/><path d="M5 1.5 V8.5 M1.5 5 H8.5" stroke="#fff" stroke-width="1.8"/></svg><div class="a" style="left:0;top:0;width:75px;height:68px;display:flex;align-items:center;justify-content:center;text-align:center;font-size:11.6px;font-weight:bold;line-height:14.5px;color:#f0f0f0">Cam 6 -<br>Ceilling</div></div>
<div class="t" style="left:8px;top:1144px;width:75px;text-align:center;font-size:9.5px;font-weight:bold;color:#ececec">Q</div>
<div class="a" style="left:99px;top:1075px;width:75px;height:68px;background:#5b5e62;border-radius:3px;overflow:hidden"><svg class="a" style="left:5px;top:52px" width="10" height="10" viewBox="0 0 10 10"><rect width="10" height="10" fill="#000"/><path d="M5 1.5 V8.5 M1.5 5 H8.5" stroke="#fff" stroke-width="1.8"/></svg><div class="a" style="left:0;top:0;width:75px;height:68px;display:flex;align-items:center;justify-content:center;text-align:center;font-size:11.6px;font-weight:bold;line-height:14.5px;color:#f0f0f0">Cleanup</div></div>
<div class="t" style="left:99px;top:1144px;width:75px;text-align:center;font-size:9.5px;font-weight:bold;color:#ececec">W</div>
<div class="a" style="left:190px;top:1075px;width:75px;height:68px;background:#5b5e62;border-radius:3px;overflow:hidden"><div class="a" style="left:0;top:0;width:75px;height:68px;display:flex;align-items:center;justify-content:center;text-align:center;font-size:11.6px;font-weight:bold;line-height:14.5px;color:#f0f0f0">NTEST3</div></div>
<div class="t" style="left:190px;top:1144px;width:75px;text-align:center;font-size:9.5px;font-weight:bold;color:#ececec">E</div>
<div class="a" style="left:280px;top:1075px;width:75px;height:68px;background:#5b5e62;border-radius:3px;overflow:hidden"><div class="a" style="left:0;top:0;width:75px;height:68px;display:flex;align-items:center;justify-content:center;text-align:center;font-size:11.6px;font-weight:bold;line-height:14.5px;color:#f0f0f0">NTEST4</div></div>
<div class="t" style="left:280px;top:1144px;width:75px;text-align:center;font-size:9.5px;font-weight:bold;color:#ececec">R</div>
<div class="a" style="left:371px;top:1075px;width:75px;height:68px;background:#5b5e62;border-radius:3px;overflow:hidden"><div class="a" style="left:0;top:0;width:75px;height:68px;display:flex;align-items:center;justify-content:center;text-align:center;font-size:11.6px;font-weight:bold;line-height:14.5px;color:#f0f0f0">NTEST5</div></div>
<div class="t" style="left:371px;top:1144px;width:75px;text-align:center;font-size:9.5px;font-weight:bold;color:#ececec">T</div>
<div class="a" style="left:462px;top:1075px;width:75px;height:68px;background:#5b5e62;border-radius:3px;overflow:hidden"><div class="a" style="left:0;top:0;width:75px;height:68px;display:flex;align-items:center;justify-content:center;text-align:center;font-size:11.6px;font-weight:bold;line-height:14.5px;color:#f0f0f0">NTEST6</div></div>
<div class="t" style="left:462px;top:1144px;width:75px;text-align:center;font-size:9.5px;font-weight:bold;color:#ececec">Y</div>
<div class="a" style="left:553px;top:1075px;width:75px;height:68px;background:#5b5e62;border-radius:3px;overflow:hidden"><div class="a" style="left:0;top:0;width:75px;height:68px;display:flex;align-items:center;justify-content:center;text-align:center;font-size:11.6px;font-weight:bold;line-height:14.5px;color:#f0f0f0">EngSwit...<br>- Init</div></div>
<div class="t" style="left:553px;top:1144px;width:75px;text-align:center;font-size:9.5px;font-weight:bold;color:#ececec">U</div>
<div class="a" style="left:643px;top:1075px;width:75px;height:68px;background:#5b5e62;border-radius:3px;overflow:hidden"><svg class="a" style="left:5px;top:52px" width="10" height="10" viewBox="0 0 10 10"><rect width="10" height="10" fill="#000"/><path d="M5 1.5 V8.5 M1.5 5 H8.5" stroke="#fff" stroke-width="1.8"/></svg><div class="a" style="left:0;top:0;width:75px;height:68px;display:flex;align-items:center;justify-content:center;text-align:center;font-size:11.6px;font-weight:bold;line-height:14.5px;color:#f0f0f0">Cleaning<br>\Mosart...</div></div>
<div class="t" style="left:643px;top:1144px;width:75px;text-align:center;font-size:9.5px;font-weight:bold;color:#ececec">I</div>
<div class="a" style="left:734px;top:1075px;width:75px;height:68px;background:#5b5e62;border-radius:3px;overflow:hidden"><svg class="a" style="left:5px;top:52px" width="10" height="10" viewBox="0 0 10 10"><rect width="10" height="10" fill="#000"/><path d="M5 1.5 V8.5 M1.5 5 H8.5" stroke="#fff" stroke-width="1.8"/></svg><div class="a" style="left:0;top:0;width:75px;height:68px;display:flex;align-items:center;justify-content:center;text-align:center;font-size:11.6px;font-weight:bold;line-height:14.5px;color:#f0f0f0">Wall<br>cleaning</div></div>
<div class="t" style="left:734px;top:1144px;width:75px;text-align:center;font-size:9.5px;font-weight:bold;color:#ececec">O</div>
<div class="a" style="left:825px;top:1075px;width:75px;height:68px;background:#5b5e62;border-radius:3px;overflow:hidden"><div class="a" style="left:0;top:0;width:75px;height:68px;display:flex;align-items:center;justify-content:center;text-align:center;font-size:11.6px;font-weight:bold;line-height:14.5px;color:#f0f0f0">Pause<br>Timeline</div></div>
<div class="t" style="left:825px;top:1144px;width:75px;text-align:center;font-size:9.5px;font-weight:bold;color:#ececec">P</div>
<div class="a" style="left:916px;top:1075px;width:75px;height:68px;background:#5b5e62;border-radius:3px;overflow:hidden"><div class="a" style="left:0;top:0;width:75px;height:68px;display:flex;align-items:center;justify-content:center;text-align:center;font-size:11.6px;font-weight:bold;line-height:14.5px;color:#f0f0f0"></div></div>
<div class="t" style="left:916px;top:1144px;width:75px;text-align:center;font-size:9.5px;font-weight:bold;color:#ececec">Å</div>
<div class="a" style="left:1006px;top:1075px;width:75px;height:68px;background:#5b5e62;border-radius:3px;overflow:hidden"><div class="a" style="left:0;top:0;width:75px;height:68px;display:flex;align-items:center;justify-content:center;text-align:center;font-size:11.6px;font-weight:bold;line-height:14.5px;color:#f0f0f0"></div></div>
<div class="t" style="left:1006px;top:1144px;width:75px;text-align:center;font-size:9.5px;font-weight:bold;color:#ececec">^</div>
<div class="a" style="left:8px;top:1161px;width:75px;height:68px;background:#d63f63;border-radius:3px;overflow:hidden"><div class="a" style="left:0;top:0;width:75px;height:68px;display:flex;align-items:center;justify-content:center;text-align:center;font-size:11.6px;font-weight:bold;line-height:14.5px;color:#5a0c1e">LIVE 1</div></div>
<div class="t" style="left:8px;top:1230px;width:75px;text-align:center;font-size:9.5px;font-weight:bold;color:#ececec">A</div>
<div class="a" style="left:99px;top:1161px;width:75px;height:68px;background:#d63f63;border-radius:3px;overflow:hidden"><div class="a" style="left:0;top:0;width:75px;height:68px;display:flex;align-items:center;justify-content:center;text-align:center;font-size:11.6px;font-weight:bold;line-height:14.5px;color:#5a0c1e">LIVE 2</div></div>
<div class="t" style="left:99px;top:1230px;width:75px;text-align:center;font-size:9.5px;font-weight:bold;color:#ececec">S</div>
<div class="a" style="left:190px;top:1161px;width:75px;height:68px;background:#d63f63;border-radius:3px;overflow:hidden"><div class="a" style="left:0;top:0;width:75px;height:68px;display:flex;align-items:center;justify-content:center;text-align:center;font-size:11.6px;font-weight:bold;line-height:14.5px;color:#5a0c1e">LIVE 3</div></div>
<div class="t" style="left:190px;top:1230px;width:75px;text-align:center;font-size:9.5px;font-weight:bold;color:#ececec">D</div>
<div class="a" style="left:280px;top:1161px;width:75px;height:68px;background:#5b5e62;border-radius:3px;overflow:hidden"><div class="a" style="left:0;top:0;width:75px;height:68px;display:flex;align-items:center;justify-content:center;text-align:center;font-size:11.6px;font-weight:bold;line-height:14.5px;color:#f0f0f0">Server to<br>program</div></div>
<div class="t" style="left:280px;top:1230px;width:75px;text-align:center;font-size:9.5px;font-weight:bold;color:#ececec">F</div>
<div class="a" style="left:371px;top:1161px;width:75px;height:68px;background:#5b5e62;border-radius:3px;overflow:hidden"><div class="a" style="left:0;top:0;width:75px;height:68px;display:flex;align-items:center;justify-content:center;text-align:center;font-size:11.6px;font-weight:bold;line-height:14.5px;color:#f0f0f0">Fill<br>LiveSet<br>effect</div></div>
<div class="t" style="left:371px;top:1230px;width:75px;text-align:center;font-size:9.5px;font-weight:bold;color:#ececec">G</div>
<div class="a" style="left:462px;top:1161px;width:75px;height:68px;background:#5b5e62;border-radius:3px;overflow:hidden"><div class="a" style="left:0;top:0;width:75px;height:68px;display:flex;align-items:center;justify-content:center;text-align:center;font-size:11.6px;font-weight:bold;line-height:14.5px;color:#f0f0f0">Clear DSK</div></div>
<div class="t" style="left:462px;top:1230px;width:75px;text-align:center;font-size:9.5px;font-weight:bold;color:#ececec">H</div>
<div class="a" style="left:553px;top:1161px;width:75px;height:68px;background:#5b5e62;border-radius:3px;overflow:hidden"><div class="a" style="left:0;top:0;width:75px;height:68px;display:flex;align-items:center;justify-content:center;text-align:center;font-size:11.6px;font-weight:bold;line-height:14.5px;color:#f0f0f0">Clear<br>current</div></div>
<div class="t" style="left:553px;top:1230px;width:75px;text-align:center;font-size:9.5px;font-weight:bold;color:#ececec">J</div>
<div class="a" style="left:643px;top:1161px;width:75px;height:68px;background:#5b5e62;border-radius:3px;overflow:hidden"><div class="a" style="left:0;top:0;width:75px;height:68px;display:flex;align-items:center;justify-content:center;text-align:center;font-size:11.6px;font-weight:bold;line-height:14.5px;color:#f0f0f0">CHECK_<br>GRAPHI...</div></div>
<div class="t" style="left:643px;top:1230px;width:75px;text-align:center;font-size:9.5px;font-weight:bold;color:#ececec">K</div>
<div class="a" style="left:734px;top:1161px;width:75px;height:68px;background:#5b5e62;border-radius:3px;overflow:hidden"><div class="a" style="left:0;top:0;width:75px;height:68px;display:flex;align-items:center;justify-content:center;text-align:center;font-size:11.6px;font-weight:bold;line-height:14.5px;color:#f0f0f0">Test<br>Named -<br>not<br>working</div></div>
<div class="t" style="left:734px;top:1230px;width:75px;text-align:center;font-size:9.5px;font-weight:bold;color:#ececec">L</div>
<div class="a" style="left:825px;top:1161px;width:75px;height:68px;background:#5b5e62;border-radius:3px;overflow:hidden"><div class="a" style="left:0;top:0;width:75px;height:68px;display:flex;align-items:center;justify-content:center;text-align:center;font-size:11.6px;font-weight:bold;line-height:14.5px;color:#f0f0f0"></div></div>
<div class="t" style="left:825px;top:1230px;width:75px;text-align:center;font-size:9.5px;font-weight:bold;color:#ececec">Ø</div>
<div class="a" style="left:916px;top:1161px;width:75px;height:68px;background:#5b5e62;border-radius:3px;overflow:hidden"><div class="a" style="left:0;top:0;width:75px;height:68px;display:flex;align-items:center;justify-content:center;text-align:center;font-size:11.6px;font-weight:bold;line-height:14.5px;color:#f0f0f0"></div></div>
<div class="t" style="left:916px;top:1230px;width:75px;text-align:center;font-size:9.5px;font-weight:bold;color:#ececec">Æ</div>
<div class="a" style="left:1006px;top:1161px;width:75px;height:68px;background:#5b5e62;border-radius:3px;overflow:hidden"><div class="a" style="left:0;top:0;width:75px;height:68px;display:flex;align-items:center;justify-content:center;text-align:center;font-size:11.6px;font-weight:bold;line-height:14.5px;color:#f0f0f0"></div></div>
<div class="t" style="left:1006px;top:1230px;width:75px;text-align:center;font-size:9.5px;font-weight:bold;color:#ececec">'</div>
<div class="a" style="left:8px;top:1247px;width:75px;height:68px;background:#5b5e62;border-radius:3px;overflow:hidden"><div class="a" style="left:0;top:0;width:75px;height:68px;display:flex;align-items:center;justify-content:center;text-align:center;font-size:11.6px;font-weight:bold;line-height:14.5px;color:#f0f0f0"></div></div>
<div class="t" style="left:8px;top:1316px;width:75px;text-align:center;font-size:9.5px;font-weight:bold;color:#ececec">&lt;</div>
<div class="a" style="left:99px;top:1247px;width:75px;height:68px;background:#5b5e62;border-radius:3px;overflow:hidden"><div class="a" style="left:0;top:0;width:75px;height:68px;display:flex;align-items:center;justify-content:center;text-align:center;font-size:11.6px;font-weight:bold;line-height:14.5px;color:#f0f0f0">Take<br>Manual<br>Out</div></div>
<div class="t" style="left:99px;top:1316px;width:75px;text-align:center;font-size:9.5px;font-weight:bold;color:#ececec">Z</div>
<div class="a" style="left:190px;top:1247px;width:75px;height:68px;background:#5b5e62;border-radius:3px;overflow:hidden"><div class="a" style="left:0;top:0;width:75px;height:68px;display:flex;align-items:center;justify-content:center;text-align:center;font-size:11.6px;font-weight:bold;line-height:14.5px;color:#f0f0f0">EngSwit...<br>-<br>PrevPre...</div></div>
<div class="t" style="left:190px;top:1316px;width:75px;text-align:center;font-size:9.5px;font-weight:bold;color:#ececec">X</div>
<div class="a" style="left:280px;top:1247px;width:75px;height:68px;background:#5b5e62;border-radius:3px;overflow:hidden"><div class="a" style="left:0;top:0;width:75px;height:68px;display:flex;align-items:center;justify-content:center;text-align:center;font-size:11.6px;font-weight:bold;line-height:14.5px;color:#f0f0f0">EngSwit...<br>- Preset<br>Style</div></div>
<div class="t" style="left:280px;top:1316px;width:75px;text-align:center;font-size:9.5px;font-weight:bold;color:#ececec">C</div>
<div class="a" style="left:371px;top:1247px;width:75px;height:68px;background:#5b5e62;border-radius:3px;overflow:hidden"><div class="a" style="left:0;top:0;width:75px;height:68px;display:flex;align-items:center;justify-content:center;text-align:center;font-size:11.6px;font-weight:bold;line-height:14.5px;color:#f0f0f0">Pretake<br>next DSK</div></div>
<div class="t" style="left:371px;top:1316px;width:75px;text-align:center;font-size:9.5px;font-weight:bold;color:#ececec">V</div>
<div class="a" style="left:462px;top:1247px;width:75px;height:68px;background:#5b5e62;border-radius:3px;overflow:hidden"><div class="a" style="left:0;top:0;width:75px;height:68px;display:flex;align-items:center;justify-content:center;text-align:center;font-size:11.6px;font-weight:bold;line-height:14.5px;color:#f0f0f0">Play/<br>Pause B</div></div>
<div class="t" style="left:462px;top:1316px;width:75px;text-align:center;font-size:9.5px;font-weight:bold;color:#ececec">B</div>
<div class="a" style="left:553px;top:1247px;width:75px;height:68px;background:#5b5e62;border-radius:3px;overflow:hidden"><div class="a" style="left:0;top:0;width:75px;height:68px;display:flex;align-items:center;justify-content:center;text-align:center;font-size:11.6px;font-weight:bold;line-height:14.5px;color:#f0f0f0">Pretake<br>next<br>WALL</div></div>
<div class="t" style="left:553px;top:1316px;width:75px;text-align:center;font-size:9.5px;font-weight:bold;color:#ececec">N</div>
<div class="a" style="left:643px;top:1247px;width:75px;height:68px;background:#5b5e62;border-radius:3px;overflow:hidden"><div class="a" style="left:0;top:0;width:75px;height:68px;display:flex;align-items:center;justify-content:center;text-align:center;font-size:11.6px;font-weight:bold;line-height:14.5px;color:#f0f0f0">P retake<br>next<br>WALL_1</div></div>
<div class="t" style="left:643px;top:1316px;width:75px;text-align:center;font-size:9.5px;font-weight:bold;color:#ececec">M</div>
<div class="a" style="left:734px;top:1247px;width:75px;height:68px;background:#5b5e62;border-radius:3px;overflow:hidden"><div class="a" style="left:0;top:0;width:75px;height:68px;display:flex;align-items:center;justify-content:center;text-align:center;font-size:11.6px;font-weight:bold;line-height:14.5px;color:#f0f0f0"></div></div>
<div class="t" style="left:734px;top:1316px;width:75px;text-align:center;font-size:9.5px;font-weight:bold;color:#ececec">,</div>
<div class="a" style="left:825px;top:1247px;width:75px;height:68px;background:#b65e76;border-radius:3px;overflow:hidden"><div class="a" style="left:0;top:0;width:75px;height:34px;background:#86c9a1"></div><div class="a" style="left:0;top:34px;width:75px;height:34px;background:#b65e76"></div><div class="a" style="left:21px;top:33px;width:33px;height:8px;background:#86c9a1"></div><div class="a" style="left:65px;top:57px;width:0;height:0;border-left:8px solid transparent;border-bottom:8px solid #9a4c62"></div><div class="a" style="left:0;top:0;width:75px;height:68px;display:flex;align-items:center;justify-content:center;text-align:center;font-size:11.6px;font-weight:bold;line-height:14.5px;color:#3f7050">N/A</div></div>
<div class="t" style="left:825px;top:1316px;width:75px;text-align:center;font-size:9.5px;font-weight:bold;color:#ececec">.</div>
<div class="a" style="left:916px;top:1247px;width:75px;height:68px;background:#5b5e62;border-radius:3px;overflow:hidden"><div class="a" style="left:0;top:0;width:75px;height:68px;display:flex;align-items:center;justify-content:center;text-align:center;font-size:11.6px;font-weight:bold;line-height:14.5px;color:#f0f0f0"></div></div>
<div class="t" style="left:916px;top:1316px;width:75px;text-align:center;font-size:9.5px;font-weight:bold;color:#ececec">-</div>
<div class="a" style="left:0;top:1345px;width:1605px;height:38px;background:#393c41"></div>
<div class="a" style="left:0;top:1381px;width:1605px;height:2px;background:#24262a"></div>
<div class="a" style="left:11px;top:1360px;width:8px;height:8px;border-radius:50%;background:#46d17f"></div>
<div class="t" style="left:25px;top:1358px;font-size:12.2px;letter-spacing:-0.15px;color:#e0e0e0">localhost</div>
<div class="a" style="left:76px;top:1354px;width:161px;height:19px;background:#c81616"></div>
<div class="t" style="left:81px;top:1358px;font-size:12.2px;font-weight:bold;letter-spacing:0px;color:#f5d8d8">(5.3.0.33583 Development)</div>
<div class="a" style="left:252px;top:1360px;width:8px;height:8px;border-radius:50%;background:#f08a1c"></div>
<div class="t" style="left:266px;top:1358px;font-size:12.2px;letter-spacing:-0.15px;color:#e0e0e0">bgo-mos-server1</div>
<div class="a" style="left:377px;top:1360px;width:8px;height:8px;border-radius:50%;background:#46d17f"></div>
<div class="t" style="left:391px;top:1358px;font-size:12.2px;letter-spacing:-0.15px;color:#e0e0e0">iNews bgo-mos-inews</div>
<div class="a" style="left:516px;top:1354px;width:1px;height:18px;background:#7a7d80"></div>
<div class="a" style="left:1218px;top:1355px;width:1px;height:17px;background:#7a7d80"></div>
<div class="t" style="left:1225px;top:1358px;font-size:12.2px;letter-spacing:-0.15px;color:#e0e0e0">Video server Omneon</div>
<div class="a" style="left:1347px;top:1355px;width:1px;height:17px;background:#7a7d80"></div>
<div class="t" style="left:1356px;top:1357px;font-size:12.2px;letter-spacing:-0.15px;color:#e0e0e0">Directtake</div>
<div class="a" style="left:1485px;top:1355px;width:1px;height:17px;background:#7a7d80"></div>
<div class="t" style="left:1501px;top:1358px;font-size:12.2px;letter-spacing:-0.4px;color:#e3a224">v5.3.0.33636 Beta</div>
<div class="a" style="left:185px;top:1382px;width:10px;height:1px;background:#8dfdb6"></div>
<div class="a" style="left:582px;top:1382px;width:10px;height:1px;background:#8dfdb6"></div>
<div class="a" style="left:1269px;top:1382px;width:15px;height:1px;background:#e0e0e0"></div>
</body></html>
